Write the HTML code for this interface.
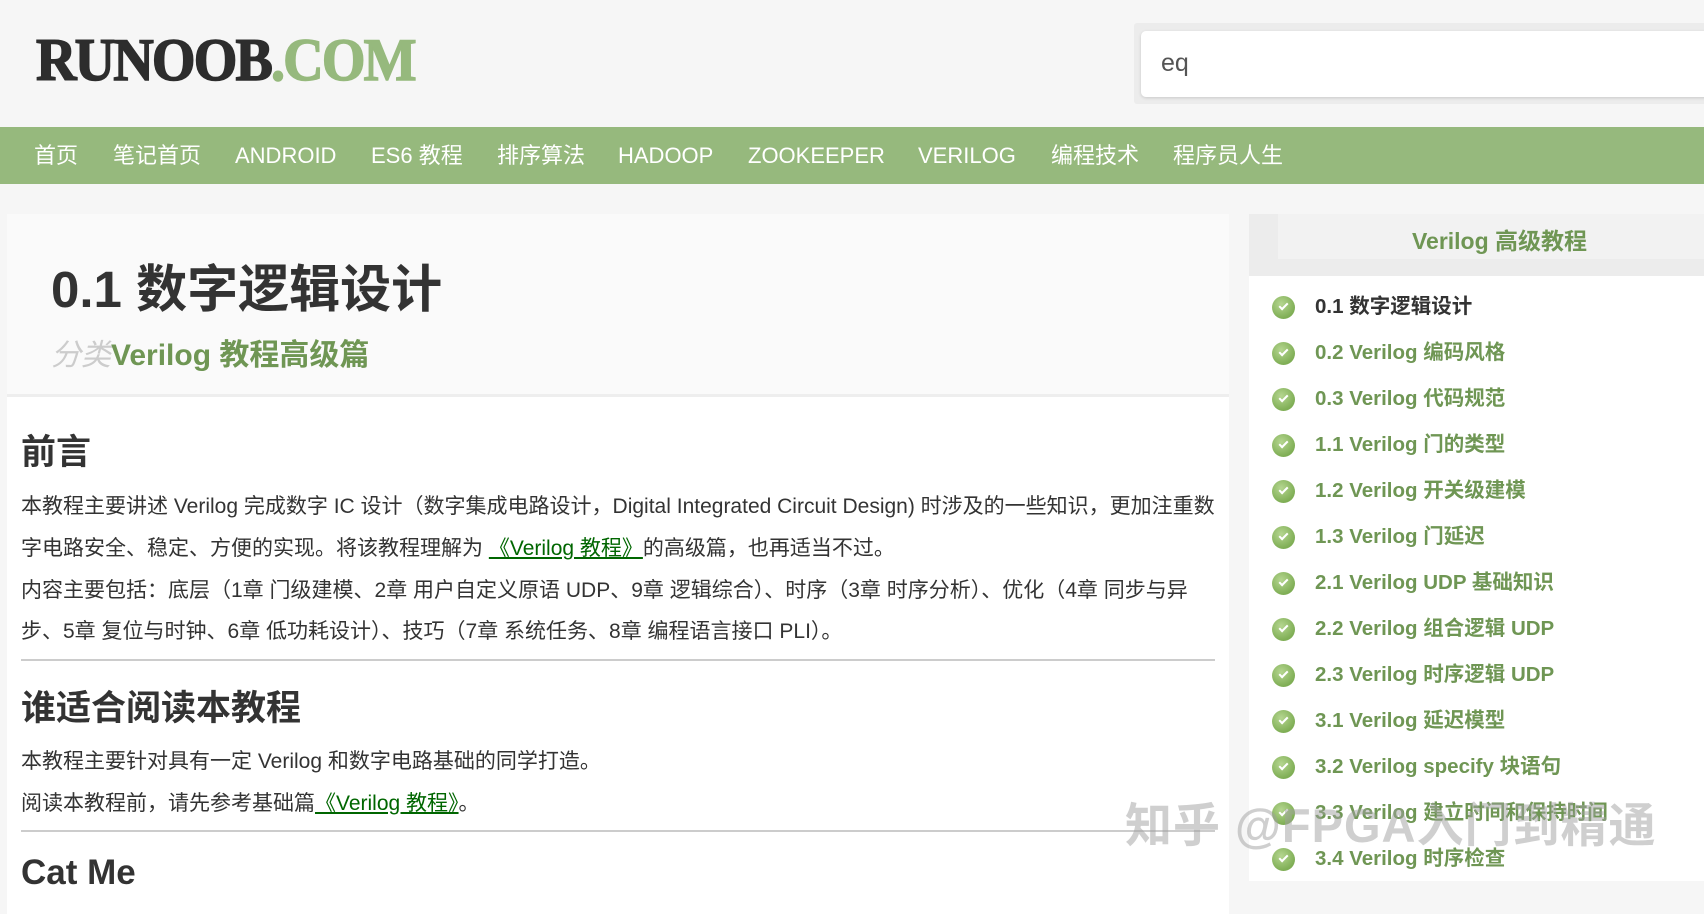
<!DOCTYPE html>
<html><head><meta charset="utf-8">
<style>
*{margin:0;padding:0;box-sizing:border-box}
body{width:1704px;height:881px;overflow:hidden;background:#f6f6f6;font-family:"Liberation Sans","Noto Sans CJK SC",sans-serif;color:#333;position:relative}
.abs{position:absolute;white-space:nowrap}
.logo{left:36px;top:30px;font-family:"Liberation Serif","Noto Serif CJK SC",serif;font-weight:900;font-size:60px;letter-spacing:-2px;color:#2d2d2d;transform:scaleX(0.935);transform-origin:left;line-height:60px;-webkit-text-stroke:1.5px #2d2d2d}
.logo span{color:#96b97d;-webkit-text-stroke:1.5px #96b97d}
.sbox{left:1134px;top:23px;width:580px;height:81px;background:#ececec;border-radius:3px}
.sin{left:1141px;top:31px;width:570px;height:66px;background:#fff;border-radius:5px;box-shadow:0 1px 3px rgba(0,0,0,.15);font-size:25px;color:#555;padding:18px 0 0 20px}
.nav{left:0;top:127px;width:1704px;height:57px;background:#96b97d}
.nav a{position:absolute;top:0;line-height:57px;height:57px;color:#fff;font-size:22px;text-decoration:none;white-space:nowrap}
.card{left:7px;top:214px;width:1222px;height:700px;background:#fff}
.chead{left:7px;top:214px;width:1222px;height:183px;background:#fafafa;border-bottom:3px solid #eee}
h1{position:absolute;left:51px;top:248px;font-size:51px;font-weight:bold;color:#333;white-space:nowrap}
.sub{left:51px;top:330px;font-size:30px;font-weight:bold;color:#6f9654}
.sub i{color:#ccc;font-weight:normal}
h2{position:absolute;left:21px;font-size:35px;font-weight:bold;color:#333;white-space:nowrap}
.p{left:21px;font-size:21px;color:#333}
.p a{color:#006600;text-decoration:underline}
.hr{left:21px;width:1194px;height:2px;background:#ccc}
.side{left:1249px;top:214px;width:455px;height:667px;background:#fff}
.shead{left:1249px;top:214px;width:455px;height:62px;background:#ececec}
.shead2{left:1278px;top:214px;width:426px;height:45px;background:#f2f2f2}
.stitle{left:1272px;top:222px;width:455px;text-align:center;font-size:23px;font-weight:bold;color:#6f9654}
.it{left:1315px;font-size:20.5px;font-weight:bold;color:#6f9654;line-height:24px}
.ic{left:1272px;width:23px;height:23px;border-radius:50%;background:radial-gradient(circle at 40% 35%,#b5d690,#7fae55 70%);}
.ic:after{content:"";position:absolute;left:7px;top:7px;width:7px;height:3px;border-left:2px solid #fff;border-bottom:2px solid #fff;transform:rotate(-45deg)}
.wm{left:1125px;top:787px;font-size:47px;color:rgba(160,160,160,.5);font-weight:bold;letter-spacing:1px}
</style></head><body>
<div class="abs logo">RUNOOB<span>.COM</span></div>
<div class="abs sbox"></div>
<div class="abs sin">eq</div>
<div class="abs nav">
<a style="left:34px">首页</a><a style="left:113px">笔记首页</a><a style="left:235px">ANDROID</a><a style="left:371px">ES6 教程</a><a style="left:497px">排序算法</a><a style="left:618px">HADOOP</a><a style="left:748px">ZOOKEEPER</a><a style="left:918px">VERILOG</a><a style="left:1051px">编程技术</a><a style="left:1173px">程序员人生</a>
</div>
<div class="abs card"></div>
<div class="abs chead"></div>
<h1>0.1 数字逻辑设计</h1>
<div class="abs sub"><i>分类</i>Verilog 教程高级篇</div>
<h2 style="top:424px">前言</h2>
<div class="abs p" style="top:490px">本教程主要讲述 Verilog 完成数字 IC 设计（数字集成电路设计，Digital Integrated Circuit Design) 时涉及的一些知识，更加注重数</div>
<div class="abs p" style="top:532px">字电路安全、稳定、方便的实现。将该教程理解为 <a>《Verilog 教程》</a>的高级篇，也再适当不过。</div>
<div class="abs p" style="top:574px">内容主要包括：底层（1章 门级建模、2章 用户自定义原语 UDP、9章 逻辑综合）、时序（3章 时序分析）、优化（4章 同步与异</div>
<div class="abs p" style="top:615px">步、5章 复位与时钟、6章 低功耗设计）、技巧（7章 系统任务、8章 编程语言接口 PLI）。</div>
<div class="abs hr" style="top:659px"></div>
<h2 style="top:680px">谁适合阅读本教程</h2>
<div class="abs p" style="top:745px">本教程主要针对具有一定 Verilog 和数字电路基础的同学打造。</div>
<div class="abs p" style="top:787px">阅读本教程前，请先参考基础篇<a>《Verilog 教程》</a>。</div>
<div class="abs hr" style="top:830px"></div>
<h2 style="top:853px">Cat Me</h2>
<div class="abs side"></div>
<div class="abs shead"></div>
<div class="abs shead2"></div>
<div class="abs stitle">Verilog 高级教程</div>
<div class="abs ic" style="top:296px"></div><div class="abs it" style="top:295px;color:#333">0.1 数字逻辑设计</div>
<div class="abs ic" style="top:342px"></div><div class="abs it" style="top:341px">0.2 Verilog 编码风格</div>
<div class="abs ic" style="top:388px"></div><div class="abs it" style="top:387px">0.3 Verilog 代码规范</div>
<div class="abs ic" style="top:434px"></div><div class="abs it" style="top:433px">1.1 Verilog 门的类型</div>
<div class="abs ic" style="top:480px"></div><div class="abs it" style="top:479px">1.2 Verilog 开关级建模</div>
<div class="abs ic" style="top:526px"></div><div class="abs it" style="top:525px">1.3 Verilog 门延迟</div>
<div class="abs ic" style="top:572px"></div><div class="abs it" style="top:571px">2.1 Verilog UDP 基础知识</div>
<div class="abs ic" style="top:618px"></div><div class="abs it" style="top:617px">2.2 Verilog 组合逻辑 UDP</div>
<div class="abs ic" style="top:664px"></div><div class="abs it" style="top:663px">2.3 Verilog 时序逻辑 UDP</div>
<div class="abs ic" style="top:710px"></div><div class="abs it" style="top:709px">3.1 Verilog 延迟模型</div>
<div class="abs ic" style="top:756px"></div><div class="abs it" style="top:755px">3.2 Verilog specify 块语句</div>
<div class="abs ic" style="top:802px"></div><div class="abs it" style="top:801px">3.3 Verilog 建立时间和保持时间</div>
<div class="abs ic" style="top:848px"></div><div class="abs it" style="top:847px">3.4 Verilog 时序检查</div>
<div class="abs wm">知乎 @FPGA入门到精通</div>
</body></html>
